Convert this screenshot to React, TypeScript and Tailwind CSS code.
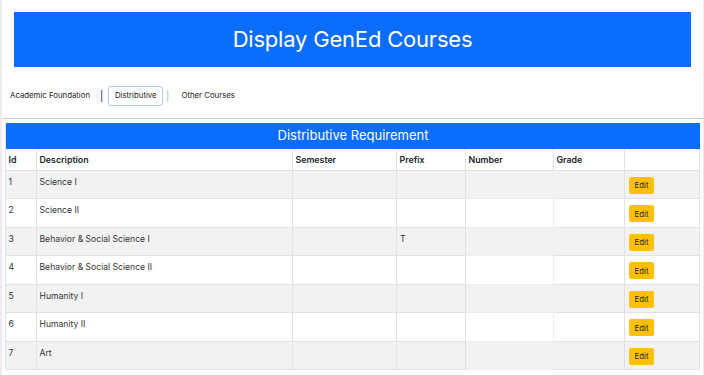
import React from 'react';

const rows = [
  { id: 1, desc: 'Science I', prefix: '' },
  { id: 2, desc: 'Science II', prefix: '' },
  { id: 3, desc: 'Behavior & Social Science I', prefix: 'T' },
  { id: 4, desc: 'Behavior & Social Science II', prefix: '' },
  { id: 5, desc: 'Humanity I', prefix: '' },
  { id: 6, desc: 'Humanity II', prefix: '' },
  { id: 7, desc: 'Art', prefix: '' },
];

const headers = ['Id', 'Description', 'Semester', 'Prefix', 'Number', 'Grade', ''];

const grid = 'grid grid-cols-[31px_256px_104px_69px_88px_71px_75px]';

export default function App() {
  return (
    <div
      className="min-h-[375px] w-full bg-white text-[#212529] border-l-2 border-r border-[#f1e9f1]"
      style={{ fontFamily: 'Inter, "Noto Sans", sans-serif' }}
    >
      <div className="px-[12px] pt-[12px]">
        <div className="flex h-[55px] items-center justify-center bg-[#0a6dfd]">
          <h1 className="text-[22px] font-normal tracking-[-0.2px] text-white">Display GenEd Courses</h1>
        </div>
      </div>

      <nav className="mt-[19px] flex h-[20px] items-center pl-[7px] text-[7.8px]">
        <button type="button" className="px-[1px]">Academic Foundation</button>
        <span className="ml-[9px] text-[10px] text-[#212529]">|</span>
        <button
          type="button"
          className="ml-[5px] h-[20px] rounded-[3px] border-[1.5px] border-[#a9c9fb] px-[5.5px]"
        >
          Distributive
        </button>
        <span className="ml-[3px] text-[10px] text-[#adb5bd]">|</span>
        <button type="button" className="ml-[12px]">Other Courses</button>
      </nav>

      <hr className="mt-[12px] border-t border-[#c9c9c9]" />

      <div className="mx-[3px] mt-[4px] w-[695px] border-l border-[#dee2e6]">
        <div className="flex h-[26px] items-center justify-center bg-[#0a6dfd] text-[13px] text-white">
          Distributive Requirement
        </div>
        <div className={`${grid} h-[21.5px] bg-white`}>
          {headers.map((h, i) => (
            <div
              key={i}
              className="flex items-center border-r border-b border-[#dee2e6] pl-[2.5px] text-[8.8px] font-semibold text-[#212529]"
            >
              {h}
            </div>
          ))}
        </div>
        {rows.map((r, i) => (
          <div
            key={r.id}
            className={`${grid} h-[28.57px] text-[8.6px] leading-[14px] text-[#333] ${i % 2 === 0 ? 'bg-[#f2f2f2]' : 'bg-white'}`}
          >
            <div className="border-r border-b border-[#dee2e6] pl-[2.5px] pt-[4px]">{r.id}</div>
            <div className="border-r border-b border-[#dee2e6] pl-[2.5px] pt-[4px]">{r.desc}</div>
            <div className="border-r border-b border-[#dee2e6]"></div>
            <div className="border-r border-b border-[#dee2e6] pl-[3px] pt-[4px]">{r.prefix}</div>
            <div className="border-r border-b border-[#eceef0]"></div>
            <div className="border-r border-b border-[#dee2e6]"></div>
            <div className="border-r border-b border-[#dee2e6] pl-[4px] pt-[6px]">
              <button
                type="button"
                className="flex h-[17px] w-[25px] items-center justify-center rounded-[2px] bg-[#ffc107] text-[7.8px] text-[#212529]"
              >
                Edit
              </button>
            </div>
          </div>
        ))}
      </div>
    </div>
  );
}
